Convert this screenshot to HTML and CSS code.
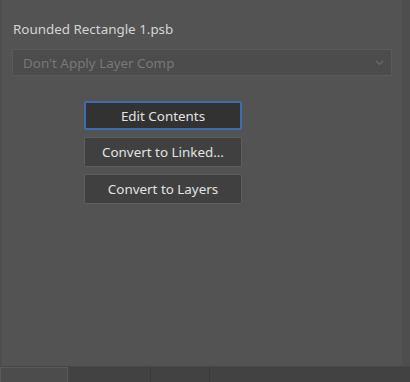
FILE: index.html
```html
<!DOCTYPE html>
<html lang="en-US">
   <head>
      <meta charset="UTF-8"/>
      <title>Properties</title>
      <link rel="stylesheet" href="styles.css">
   </head>
   <body>
      <div class="panel">
         <div class="content">
            <div class="docName">Rounded Rectangle 1.psb</div>

            <div class="compSelect">
               <span class="compLabel">Don't Apply Layer Comp</span>
               <svg class="chevron" width="9" height="6" viewBox="0 0 9 6">
                  <path d="M1 1 L4.5 4.5 L8 1" fill="none" stroke="#6a6a6a" stroke-width="1.2"/>
               </svg>
            </div>

            <div class="actions">
               <button class="btn btnFocus">Edit Contents</button>
               <button class="btn">Convert to Linked...</button>
               <button class="btn">Convert to Layers</button>
            </div>
         </div>
         <div class="sideStrip"></div>
      </div>

      <div class="tabBar">
         <div class="tab tabActive"></div>
         <div class="tab tabWide"></div>
         <div class="tab tabShort"></div>
         <div class="tab tabRest"></div>
      </div>
   </body>
</html>
```

FILE: styles.css
```css
html, body {
   margin: 0;
   padding: 0;
   height: 100%;
   background: #535353;
   font-family: "Noto Sans", "Open Sans", sans-serif;
   overflow: hidden;
}

body {
   display: flex;
   flex-direction: column;
}

.panel {
   flex: 1;
   display: flex;
   border-left: 2px solid #4d4d4d;
}

.content {
   flex: 1;
   padding: 19px 10px 0 10px;
}

.sideStrip {
   width: 8px;
   background: #4e4e4e;
}

.docName {
   font-size: 13.4px;
   color: #d4d4d4;
   line-height: 20px;
   padding-left: 1px;
}

.compSelect {
   margin-top: 10px;
   height: 25px;
   display: flex;
   align-items: center;
   justify-content: space-between;
   background: #4c4c4c;
   border: 1px solid #5a5a5a;
   padding: 0 7px 0 10px;
}

.compLabel {
   font-size: 13.4px;
   color: #787878;
}

.actions {
   display: flex;
   flex-direction: column;
   gap: 7px;
   margin: 25px 0 0 72px;
   width: 158px;
}

.btn {
   height: 30px;
   background: #404040;
   border: 1px solid #5e5e5e;
   border-radius: 2px;
   color: #e2e2e2;
   font-family: "Noto Sans", "Open Sans", sans-serif;
   font-size: 13.4px;
   padding: 0;
}

.btnFocus {
   height: 29px;
   background: #323232;
   border-color: #3f6cae;
   border-width: 2px;
}

.tabBar {
   height: 15px;
   display: flex;
   background: #424242;
   border-top: 1px solid #474747;
}

.tab {
   border-right: 1px solid #3a3a3a;
}

.tabActive {
   width: 66px;
   background: #4c4c4c;
   border: 1px solid #5a5a5a;
   border-bottom: none;
}

.tabWide {
   width: 82px;
}

.tabShort {
   width: 58px;
}

.tabRest {
   flex: 1;
   border-right: none;
}
```
